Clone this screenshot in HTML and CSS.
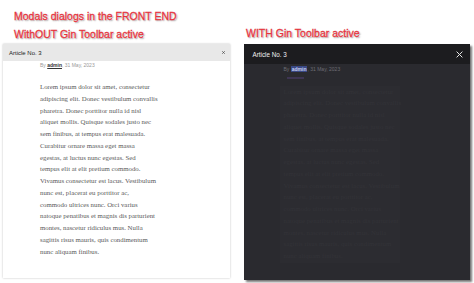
FILE: index.html
```html
<!DOCTYPE html>
<html lang="en">
<head>
<meta charset="utf-8">
<title>Modals dialogs</title>
<link rel="stylesheet" href="styles.css">
</head>
<body>
<div class="page">
  <section class="col">
    <div class="note note-left">
      <p>Modals dialogs in the FRONT END</p>
      <p>WithOUT Gin Toolbar active</p>
    </div>
    <div class="dialog light">
      <div class="dlg-head">
        <span class="dlg-title">Article No. 3</span>
        <span class="close"><svg width="3" height="3" viewBox="0 0 3 3"><path d="M0.3 0.3L2.7 2.7M2.7 0.3L0.3 2.7" stroke="#555" stroke-width="0.9"/></svg></span>
      </div>
      <div class="dlg-body">
        <div class="byline">By <a class="author">admin</a>, 31 May, 2023</div>
        <p class="article">Lorem ipsum dolor sit amet, consectetur<br>adipiscing elit. Donec vestibulum convallis<br>pharetra. Donec porttitor nulla id nisl<br>aliquet mollis. Quisque sodales justo nec<br>sem finibus, at tempus erat malesuada.<br>Curabitur ornare massa eget massa<br>egestas, at luctus nunc egestas. Sed<br>tempus elit at elit pretium commodo.<br>Vivamus consectetur est lacus. Vestibulum<br>nunc est, placerat eu porttitor ac,<br>commodo ultrices nunc. Orci varius<br>natoque penatibus et magnis dis parturient<br>montes, nascetur ridiculus mus. Nulla<br>sagittis risus mauris, quis condimentum<br>nunc aliquam finibus.</p>
      </div>
    </div>
  </section>
  <section class="col">
    <div class="note note-right">
      <p>WITH Gin Toolbar active</p>
    </div>
    <div class="dialog dark">
      <div class="dlg-head">
        <span class="dlg-title">Article No. 3</span>
        <span class="close"><svg width="7" height="7" viewBox="0 0 7 7"><path d="M0.6 0.6L6.4 6.4M6.4 0.6L0.6 6.4" stroke="#e6e6e6" stroke-width="1"/></svg></span>
      </div>
      <div class="dlg-body">
        <div class="byline">By <a class="author">admin</a>, 31 May, 2023</div>
        <div class="mark"></div>
        <p class="article">Lorem ipsum dolor sit amet, consectetur<br>adipiscing elit. Donec vestibulum convallis<br>pharetra. Donec porttitor nulla id nisl<br>aliquet mollis. Quisque sodales justo nec<br>sem finibus, at tempus erat malesuada.<br>Curabitur ornare massa eget massa<br>egestas, at luctus nunc egestas. Sed<br>tempus elit at elit pretium commodo.<br>Vivamus consectetur est lacus. Vestibulum<br>nunc est, placerat eu porttitor ac,<br>commodo ultrices nunc. Orci varius<br>natoque penatibus et magnis dis parturient<br>montes, nascetur ridiculus mus. Nulla<br>sagittis risus mauris, quis condimentum<br>nunc aliquam finibus.</p>
      </div>
    </div>
  </section>
</div>
</body>
</html>
```
FILE: styles.css
```css
html, body {
  margin: 0;
  background: #ffffff;
}
body {
  font-family: "Liberation Sans", Arial, sans-serif;
  width: 474px;
  height: 283px;
  overflow: hidden;
}
.page {
  display: flex;
  gap: 14px;
  padding-left: 3px;
  height: 283px;
}
.col {
  width: 227px;
  display: flex;
  flex-direction: column;
}
.note {
  height: 44px;
  box-sizing: border-box;
  display: flex;
  flex-direction: column;
  justify-content: flex-end;
}
.note p {
  margin: 0;
  font-size: 10.5px;
  line-height: 18px;
  color: #e5343d;
  white-space: nowrap;
  -webkit-text-stroke: 0.3px #e5343d;
  text-shadow: 0 0 1px #fff, 0 0 1px #fff, 1px 1px 1.5px rgba(0,0,0,0.45);
}
.note-left {
  padding-left: 11px;
  padding-bottom: 1px;
}
.note-right {
  padding-left: 2px;
  padding-bottom: 2px;
}
.dialog {
  display: flex;
  flex-direction: column;
}
.dlg-head {
  display: flex;
  align-items: center;
  justify-content: space-between;
  flex: none;
}
.close {
  display: flex;
}
.byline {
  font-size: 5px;
  line-height: 8px;
  white-space: nowrap;
}
.author {
  font-weight: bold;
}
.article {
  margin: 0;
  font-family: "Liberation Serif", "Times New Roman", serif;
  font-size: 6.8px;
  line-height: 11.76px;
  white-space: nowrap;
}

/* light dialog */
.light {
  height: 234px;
  box-shadow: 0 0 2px rgba(0,0,0,0.25);
}
.light .dlg-head {
  height: 17px;
  background: #e8e8e8;
  padding: 0 5px 0 6px;
}
.light .dlg-title {
  font-size: 6px;
  color: #222;
}
.light .dlg-body {
  flex: 1;
  background: #ffffff;
  padding-left: 37px;
}
.light .byline {
  color: #999;
}
.light .author {
  color: #333;
  text-decoration: underline;
}
.light .article {
  margin-top: 12px;
  color: #5a5a5a;
}

/* dark dialog */
.dark {
  height: 236px;
  width: 226px;
  margin-left: -0.5px;
  box-shadow: 2px 2px 2px rgba(0,0,0,0.55);
}
.dark .dlg-head {
  height: 20px;
  background: #1c1c1f;
  padding: 0 7px 0 9px;
}
.dark .dlg-title {
  font-size: 6.3px;
  color: #f2f2f2;
}
.dark .dlg-body {
  flex: 1;
  background: #2a2a2f;
  padding-left: 40px;
  padding-top: 1px;
}
.dark .byline {
  color: #6d6d74;
}
.dark .author {
  background: #3a4985;
  color: #c9d1f2;
  padding: 0 1px;
}
.mark {
  width: 17px;
  height: 2px;
  margin: 3.5px 0 0 3px;
  background: #3e3553;
}
.dark .article {
  margin: 7px 0 0 -4px;
  width: 112px;
  padding: 0 4px 1px;
  background: #2c2c31;
  color: #333338;
}
```
